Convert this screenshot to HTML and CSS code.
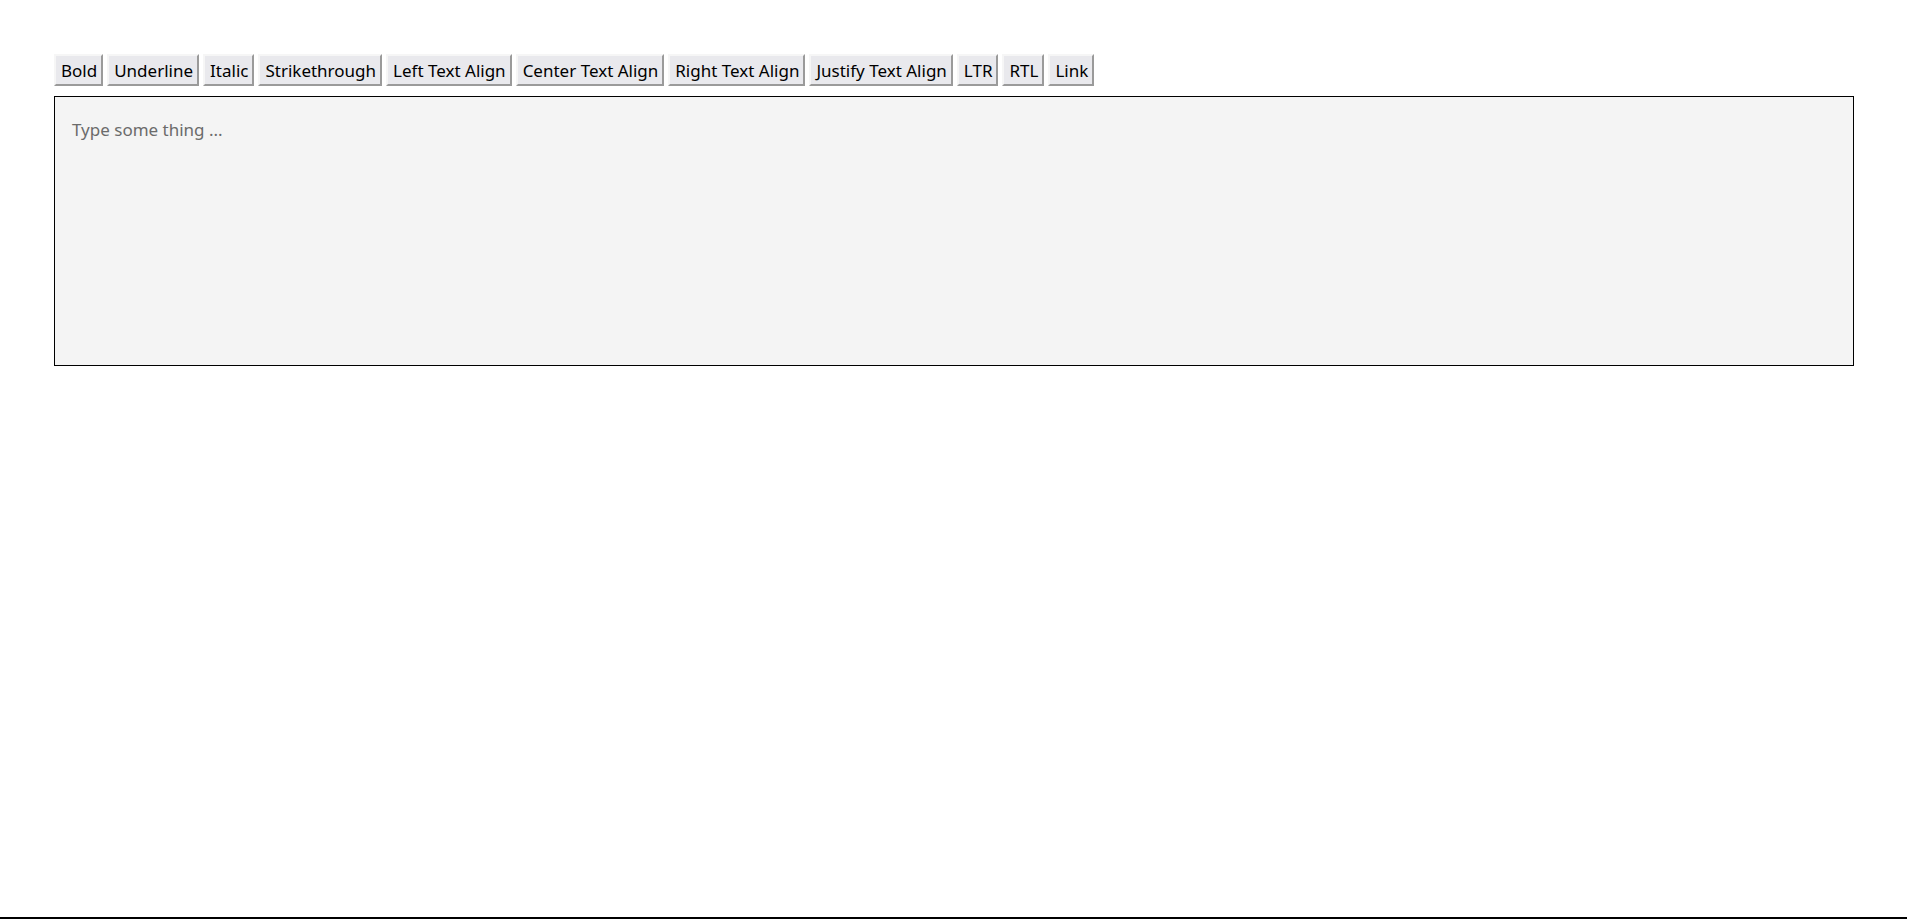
FILE: index.html
```html
<!DOCTYPE html>
<html lang="en">
<head>
<meta charset="utf-8">
<title>Editor</title>
<link rel="stylesheet" href="styles.css">
</head>
<body>
<div class="page">
  <div class="editor">
    <div class="toolbar">
      <button class="tb">Bold</button>
      <button class="tb">Underline</button>
      <button class="tb">Italic</button>
      <button class="tb">Strikethrough</button>
      <button class="tb">Left Text Align</button>
      <button class="tb">Center Text Align</button>
      <button class="tb">Right Text Align</button>
      <button class="tb">Justify Text Align</button>
      <button class="tb">LTR</button>
      <button class="tb">RTL</button>
      <button class="tb">Link</button>
    </div>
    <div class="area"><span class="placeholder">Type some thing ...</span></div>
  </div>
  <div class="footer-line"></div>
</div>
</body>
</html>
```

FILE: styles.css
```css
html, body {
  margin: 0;
  padding: 0;
  background: #fff;
}
.page {
  min-height: 923px;
  display: flex;
  flex-direction: column;
  font-family: "Noto Sans", "Open Sans", sans-serif;
}
.editor {
  padding: 54px 66px 0 54px;
}
.toolbar {
  display: flex;
  gap: 4px;
  margin-bottom: 10px;
}
.tb {
  font-family: "Noto Sans", "Open Sans", sans-serif;
  font-size: 17px;
  color: #000;
  background: #e9e9ed;
  height: 32px;
  padding: 2px 4px 0 5px;
  border: 2px solid;
  border-color: #f6f6f6 #9a9a9a #9a9a9a #f6f6f6;
  border-radius: 0;
  line-height: 26px;
}
.area {
  border: 1px solid #000;
  background: #f4f4f4;
  padding: 21px 17px;
  box-sizing: border-box;
  height: 270px;
}
.placeholder {
  color: #6b6b6b;
  font-size: 17px;
}
.footer-line {
  margin-top: auto;
  margin-bottom: 4px;
  width: 1907px;
  height: 2px;
  background: #000;
}
```
